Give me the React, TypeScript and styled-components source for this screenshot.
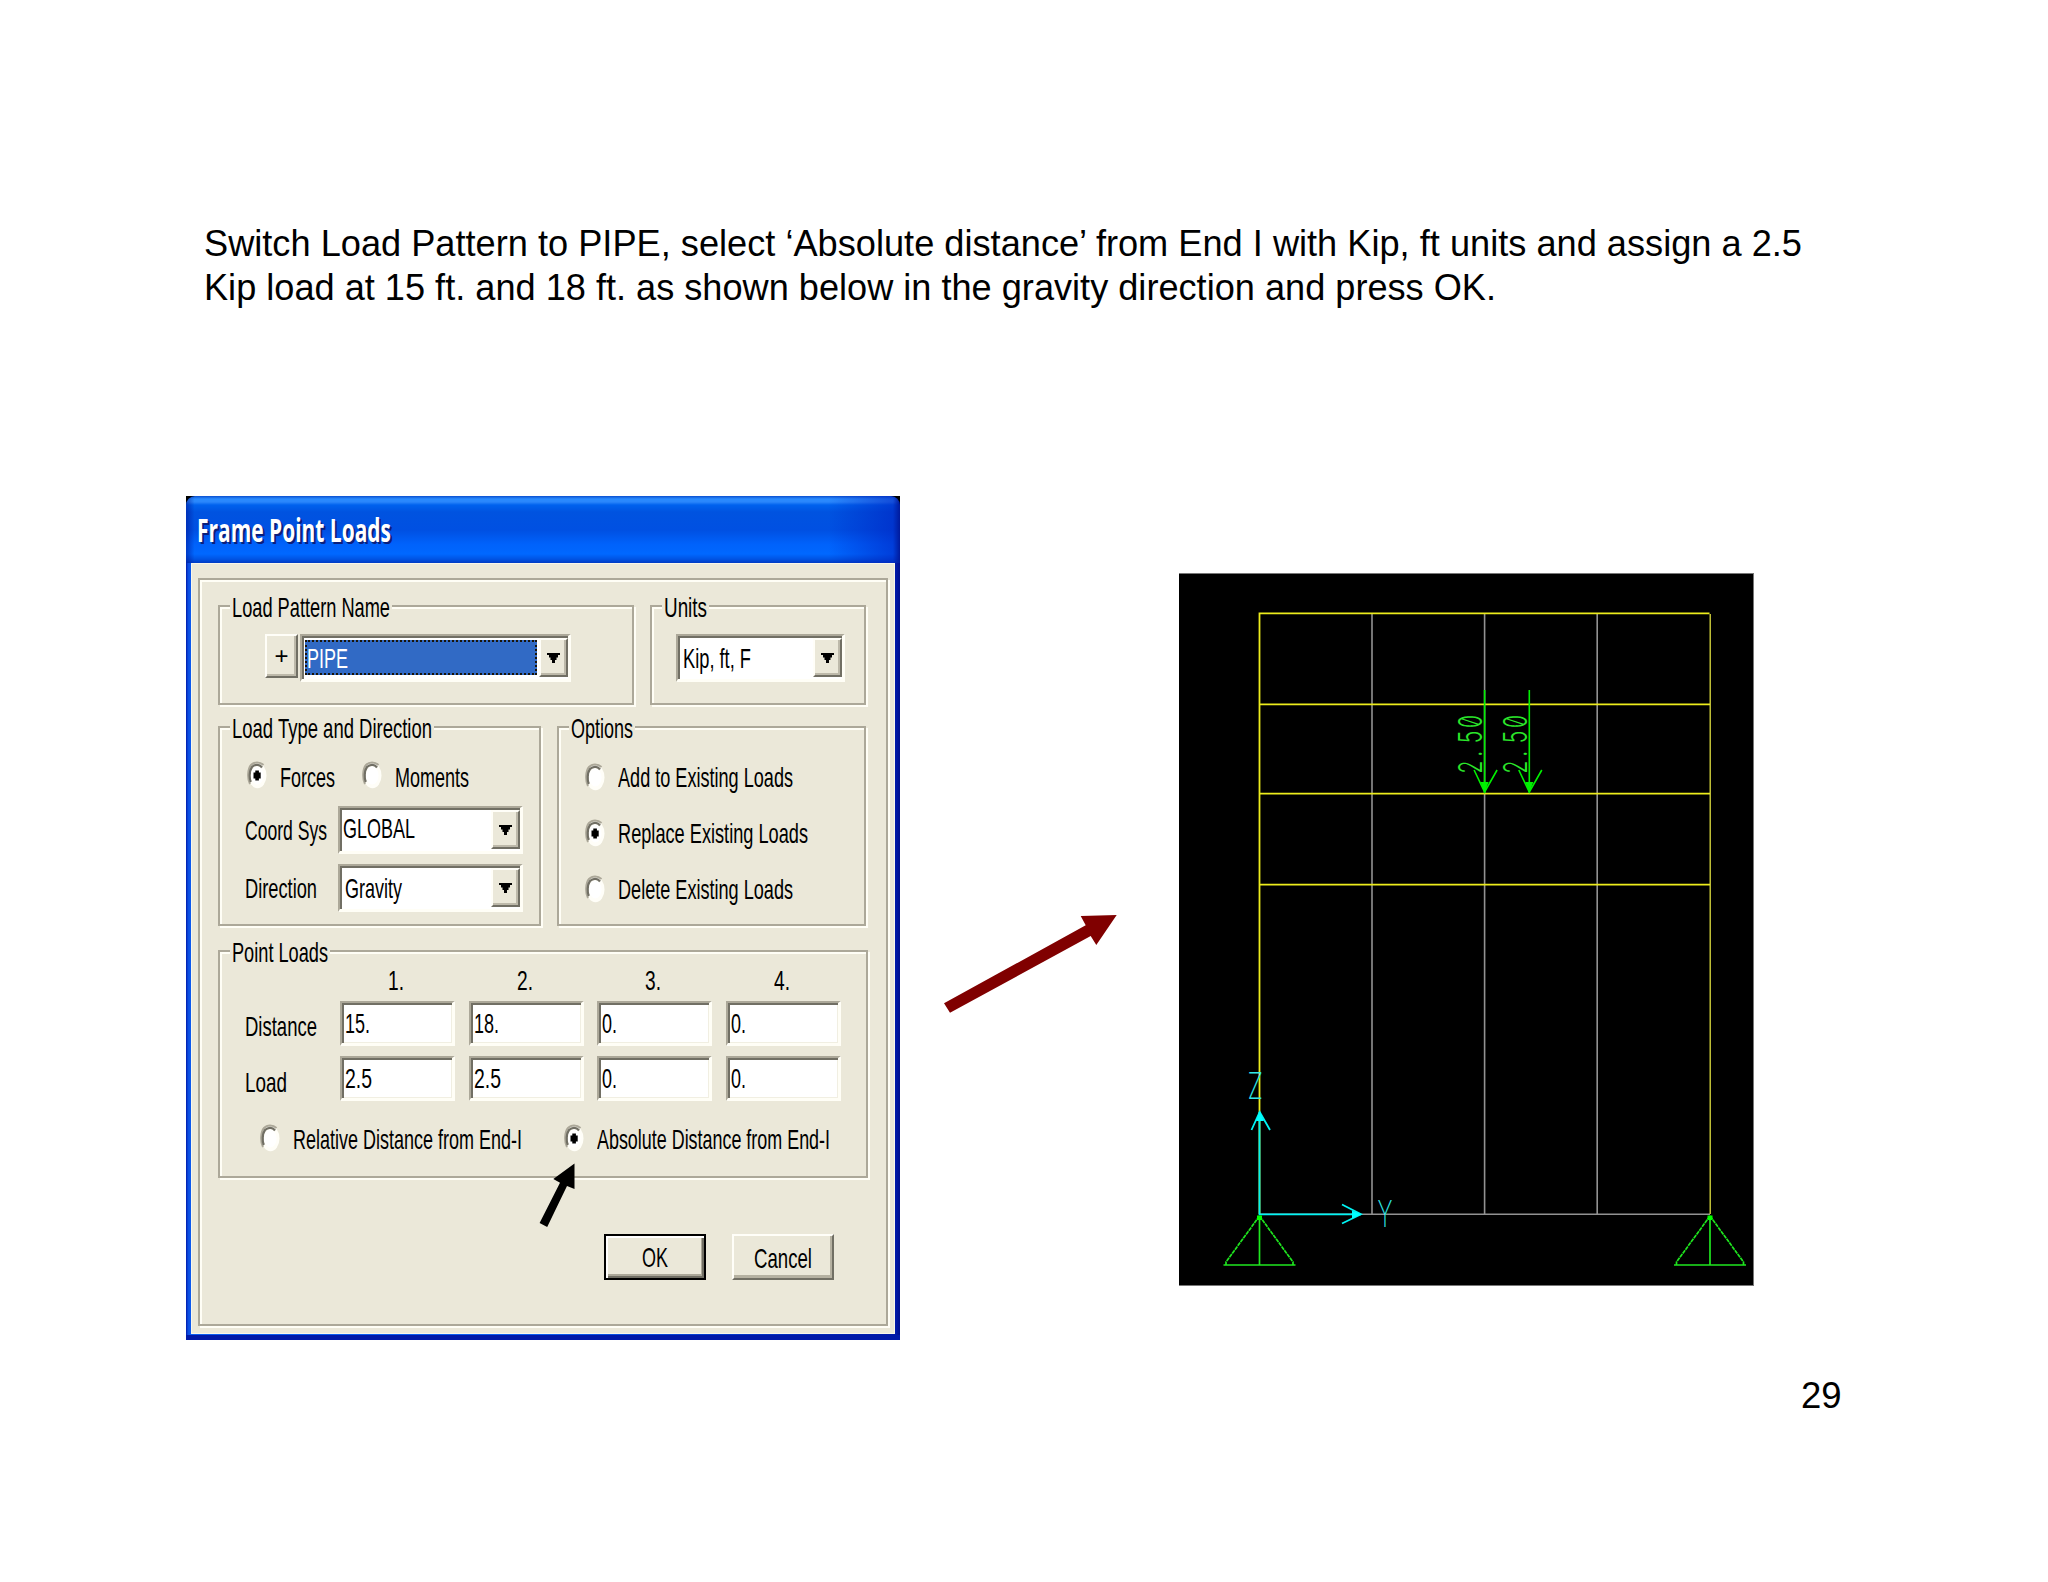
import React, { useLayoutEffect, useRef, useState } from "react";
import styled, { createGlobalStyle } from "styled-components";

const FACE = "#ebe8d9";
const SHADOW = "#aca899";
const DARK = "#716f64";
const LIGHT = "#fffef6";

const GlobalStyle = createGlobalStyle`
  *, *::before, *::after { box-sizing: border-box; }
  body { margin: 0; background: #fff; }
`;

const Page = styled.main`
  width: 2048px;
  height: 1582px;
  padding-top: 222px;
  overflow: hidden;
  background: #fff;
  color: #000;
  font-family: "Liberation Sans", Arial, sans-serif;
`;

const Instructions = styled.div`
  height: 274px;
  padding-left: 204px;
  font-size: 36.5px;
  line-height: 43.5px;
`;

const Line = styled.div`
  display: flex;
`;

const Stage = styled.section`
  display: flex;
  align-items: flex-start;
  height: 844px;
  padding-left: 186px;
`;

const PageNumber = styled.footer`
  margin: 34px 0 0 1801px;
  font-size: 36.5px;
  line-height: 43.5px;
`;

/* Text condensed horizontally to an exact advance width */
const FitBox = styled.span<{ $w: number }>`
  display: inline-block;
  flex: none;
  width: ${(p) => p.$w}px;
  white-space: nowrap;
`;
const FitInner = styled.span`
  display: inline-block;
  transform-origin: 0 0;
`;

function Fit({ w, children }: { w: number; children: React.ReactNode }) {
  const ref = useRef<HTMLSpanElement>(null);
  const [scale, setScale] = useState(1);
  useLayoutEffect(() => {
    const natural = ref.current!.getBoundingClientRect().width;
    setScale(w / natural);
  }, [w]);
  return (
    <FitBox $w={w}>
      <FitInner ref={ref} style={{ transform: `scaleX(${scale})` }}>
        {children}
      </FitInner>
    </FitBox>
  );
}

const Dialog = styled.div`
  position: relative;
  flex: none;
  display: flex;
  flex-direction: column;
  width: 714px;
  height: 844px;
  background: #000;
  font-size: 28.5px;
  line-height: 28px;
`;

const TitleBar = styled.header`
  flex: none;
  height: 67px;
  padding: 16px 0 0 11px;
  border-radius: 9px 9px 0 0;
  background:
    linear-gradient(90deg, rgba(0, 20, 150, 0.55), rgba(0, 60, 220, 0) 1.2%, rgba(0, 60, 220, 0) 90%, rgba(0, 30, 190, 0.55) 99%, #001a9c),
    linear-gradient(180deg, #0a4fd0 0, #2a8cff 3px, #2a86fb 6px, #0062ee 9px, #0053e0 16px, #0050e2 34px, #0062fb 48px, #0068ff 58px, #0054e4 63px, #003bc4 67px);
  color: #fff;
  font-family: "Open Sans", "Noto Sans", sans-serif;
  font-size: 32px;
  font-weight: 700;
  line-height: 36px;
  text-shadow: 3px 2px 0 #0a1f7c;
`;

const Chrome = styled.div`
  flex: 1;
  padding: 0 5px 6px;
  background: linear-gradient(90deg, #0019a8 0, #0b4be0 2px, #0c5cf0 5px, #0c5cf0 50%, #0019a8 calc(100% - 4px), #000f8c 100%);
  box-shadow: inset 0 -5px 0 #0019a8;
`;

const Client = styled.div`
  height: 771px;
  padding: 14px 6px 7px 6px;
  border: 1px solid #f8f6ea;
  background: ${FACE};
`;

const etched = `
  border: 2px solid ${SHADOW};
  box-shadow: 2px 2px 0 ${LIGHT}, inset 2px 2px 0 ${LIGHT};
`;

const Frame = styled.div`
  ${etched}
  display: flex;
  flex-direction: column;
  width: 690px;
  height: 748px;
  padding: 25px 0 0 18px;
`;

const Columns = styled.div<{ $mb: number }>`
  display: flex;
  gap: 16px;
  margin-bottom: ${(p) => p.$mb}px;
`;

const Group = styled.section<{ $w: number; $h: number }>`
  ${etched}
  flex: none;
  width: ${(p) => p.$w}px;
  height: ${(p) => p.$h}px;
`;

const Legend = styled.div`
  display: block;
  width: fit-content;
  height: 28px;
  margin: -14px 0 0 10px;
  padding: 0 2px;
  background: ${FACE};
`;

const Row = styled.div<{ $pl?: number; $pt?: number; $h?: number; $gap?: number }>`
  display: flex;
  align-items: flex-start;
  gap: ${(p) => p.$gap ?? 0}px;
  padding-left: ${(p) => p.$pl ?? 0}px;
  padding-top: ${(p) => p.$pt ?? 0}px;
  height: ${(p) => (p.$h ? `${p.$h}px` : "auto")};
`;

const Label = styled.div<{ $w: number; $pt?: number }>`
  flex: none;
  width: ${(p) => p.$w}px;
  padding-top: ${(p) => p.$pt ?? 0}px;
`;

const raised = `
  background: ${FACE};
  border-style: solid;
  border-width: 2px;
  border-color: #fffef8 ${DARK} ${DARK} #fffef8;
  box-shadow: inset -2px -2px 0 #bdb9aa;
`;

const PlusButton = styled.button`
  ${raised}
  width: 33px;
  height: 44px;
  margin: 0;
  padding: 0;
  display: flex;
  align-items: center;
  justify-content: center;
  font: 24px/1 "Liberation Sans", Arial, sans-serif;
  color: #000;
`;

const sunken = `
  border-style: solid;
  border-width: 2px 3px 3px 2px;
  border-color: ${SHADOW} ${LIGHT} ${LIGHT} ${SHADOW};
`;

const Combo = styled.div<{ $w: number }>`
  ${sunken}
  flex: none;
  display: flex;
  width: ${(p) => p.$w}px;
  height: 48px;
  padding: 2px 0 1px 2px;
  background: #fff;
  box-shadow: inset 2px 2px 0 ${DARK};
`;

const ComboValue = styled.div<{ $lift?: number; $pl?: number }>`
  flex: 1;
  padding-left: ${(p) => p.$pl ?? 3}px;
  line-height: ${(p) => 41 - (p.$lift ?? 0) * 2}px;
`;

const ComboSelected = styled.div`
  flex: 1;
  height: 35px;
  margin: 2px 2px 0 1px;
  padding-left: 0;
  border: 2px dotted #1a1408;
  background: #316ac5;
  color: #fff;
  line-height: 33px;
`;

const DropButton = styled.div`
  ${raised}
  flex: none;
  display: flex;
  align-items: center;
  justify-content: center;
  width: 29px;
  height: 39px;
`;

const Field = styled.div`
  ${sunken}
  flex: none;
  width: 115px;
  height: 45px;
  padding: 6px 0 0 3px;
  background: #fff;
  box-shadow: inset 2px 2px 0 ${DARK}, inset -1px -1px 0 #f1efe2;
`;

const ColumnHead = styled.div`
  width: 115px;
  padding-left: 48px;
`;

const Option = styled.div<{ $gap: number; $w: number }>`
  flex: none;
  display: flex;
  align-items: flex-start;
  gap: ${(p) => p.$gap}px;
  width: ${(p) => p.$w}px;
  height: 28px;
`;

const RadioSvg = styled.svg<{ $dy: number }>`
  flex: none;
  display: block;
  margin-top: ${(p) => p.$dy}px;
`;

const PushButton = styled.button<{ $default?: boolean }>`
  width: 102px;
  height: 46px;
  margin: 0;
  padding: ${(p) => (p.$default ? "0 0 1px" : "2px 0 1px")};
  display: flex;
  align-items: center;
  justify-content: center;
  color: #000;
  background: ${FACE};
  font: 28.5px/28px "Liberation Sans", Arial, sans-serif;
  border: 2px solid;
  border-color: ${(p) => (p.$default ? "#000" : `#fffef8 ${DARK} ${DARK} #fffef8`)};
  box-shadow: ${(p) =>
    p.$default
      ? `inset 2px 2px 0 #fff, inset -2px -2px 0 ${DARK}, inset -3px -4px 0 ${SHADOW}`
      : "inset -2px -3px 0 #b5b1a1"};
`;

const Pointer = styled.svg`
  position: absolute;
  left: 350px;
  top: 665px;
`;

const FlowArrow = styled.svg`
  flex: none;
  margin: 407px 0 0 43px;
`;

const Model = styled.svg`
  flex: none;
  display: block;
  margin: 77px 0 0 61px;
  background: #000;
`;

function Radio({ on, dy = 0 }: { on?: boolean; dy?: number }) {
  return (
    <RadioSvg $dy={dy} width="20" height="28" viewBox="0 0 20 28">
      <ellipse cx="10.5" cy="14.5" rx="9" ry="12.8" fill="#fffef8" />
      <path d="M3 23 C0.2 18 0.6 8 4 4 C7 .6 13 .6 16.5 4" fill="none" stroke="#aca899" strokeWidth="2" />
      <path d="M3.8 21 C2 17 2.4 9.500 5 6 C8 3 12.500 3 15 6.500" fill="none" stroke="#716f64" strokeWidth="2.2" />
      <ellipse cx="10.300" cy="14.500" rx="6.300" ry="9" fill="#fff" />
      {on && <path d="M8.300 9.500h3.600v2h1.800v6h-1.800v2H8.300v-2H6.500v-6h1.800z" fill="#000" />}
    </RadioSvg>
  );
}

function Dropdown() {
  return (
    <DropButton>
      <svg width="13" height="10" viewBox="0 0 13 10">
        <path d="M0 0H13V2H11V4.500H9.500V7H8V10H5V7H3.500V4.500H2V2H0Z" fill="#000" />
      </svg>
    </DropButton>
  );
}

const distances: [string, number][] = [["15.", 25], ["18.", 25], ["0.", 15], ["0.", 15]];
const loads: [string, number][] = [["2.5", 27], ["2.5", 27], ["0.", 15], ["0.", 15]];
const options: [string, number, boolean][] = [
  ["Add to Existing Loads", 175, false],
  ["Replace Existing Loads", 190, true],
  ["Delete Existing Loads", 175, false],
];

function FramePointLoads() {
  return (
    <Dialog>
      <TitleBar>
        <Fit w={194}>Frame Point Loads</Fit>
      </TitleBar>
      <Chrome>
        <Client>
          <Frame>
            <Columns $mb={21}>
              <Group $w={416} $h={100}>
                <Legend><Fit w={158}>Load Pattern Name</Fit></Legend>
                <Row $pl={45} $pt={13} $gap={2}>
                  <PlusButton>+</PlusButton>
                  <Combo $w={271}>
                    <ComboSelected><Fit w={41}>PIPE</Fit></ComboSelected>
                    <Dropdown />
                  </Combo>
                </Row>
              </Group>
              <Group $w={216} $h={100}>
                <Legend><Fit w={43}>Units</Fit></Legend>
                <Row $pl={24} $pt={13}>
                  <Combo $w={169}>
                    <ComboValue><Fit w={68}>Kip, ft, F</Fit></ComboValue>
                    <Dropdown />
                  </Combo>
                </Row>
              </Group>
            </Columns>
            <Columns $mb={24}>
              <Group $w={323} $h={200}>
                <Legend><Fit w={200}>Load Type and Direction</Fit></Legend>
                <Row $pl={27} $pt={21} $h={64}>
                  <Option $gap={13} $w={115}>
                    <Radio on dy={-2} />
                    <Fit w={55}>Forces</Fit>
                  </Option>
                  <Option $gap={13} $w={115}>
                    <Radio dy={-2} />
                    <Fit w={74}>Moments</Fit>
                  </Option>
                </Row>
                <Row $pl={25} $h={58}>
                  <Label $w={93} $pt={10}><Fit w={82}>Coord Sys</Fit></Label>
                  <Combo $w={185}>
                    <ComboValue $lift={2} $pl={1}><Fit w={72}>GLOBAL</Fit></ComboValue>
                    <Dropdown />
                  </Combo>
                </Row>
                <Row $pl={25}>
                  <Label $w={93} $pt={10}><Fit w={72}>Direction</Fit></Label>
                  <Combo $w={185}>
                    <ComboValue><Fit w={57}>Gravity</Fit></ComboValue>
                    <Dropdown />
                  </Combo>
                </Row>
              </Group>
              <Group $w={309} $h={200}>
                <Legend><Fit w={62}>Options</Fit></Legend>
                <Row $pt={21} />
                {options.map(([text, w, on]) => (
                  <Row key={text} $pl={26} $h={56}>
                    <Option $gap={13} $w={230}>
                      <Radio on={on} />
                      <Fit w={w}>{text}</Fit>
                    </Option>
                  </Row>
                ))}
              </Group>
            </Columns>
            <Group $w={650} $h={228}>
              <Legend><Fit w={96}>Point Loads</Fit></Legend>
              <Row $pl={120} $gap={13.6} $h={35}>
                {["1.", "2.", "3.", "4."].map((t) => (
                  <ColumnHead key={t}><Fit w={16}>{t}</Fit></ColumnHead>
                ))}
              </Row>
              <Row $pl={25} $h={55}>
                <Label $w={95} $pt={11}><Fit w={72}>Distance</Fit></Label>
                <Row $gap={13.6}>
                  {distances.map(([t, w], i) => (
                    <Field key={i}><Fit w={w}>{t}</Fit></Field>
                  ))}
                </Row>
              </Row>
              <Row $pl={25} $h={69}>
                <Label $w={95} $pt={12}><Fit w={42}>Load</Fit></Label>
                <Row $gap={13.6}>
                  {loads.map(([t, w], i) => (
                    <Field key={i}><Fit w={w}>{t}</Fit></Field>
                  ))}
                </Row>
              </Row>
              <Row $pl={40}>
                <Option $gap={13} $w={304}>
                  <Radio dy={-1} />
                  <Fit w={229}>Relative Distance from End-I</Fit>
                </Option>
                <Option $gap={13} $w={270}>
                  <Radio on dy={-1} />
                  <Fit w={233}>Absolute Distance from End-I</Fit>
                </Option>
              </Row>
            </Group>
            <Row $pl={386} $pt={56} $gap={26}>
              <PushButton $default><Fit w={26}>OK</Fit></PushButton>
              <PushButton><Fit w={58}>Cancel</Fit></PushButton>
            </Row>
          </Frame>
        </Client>
      </Chrome>
      <Pointer width="42" height="70" viewBox="536 1161 42 70">
        <path d="M574.500 1163.500L553.300 1179L560 1182.700L539.600 1223L547.200 1227L567 1186L574.500 1189Z" fill="#000" />
      </Pointer>
    </Dialog>
  );
}

const Digits = styled.text`
  font-family: Inter, "Liberation Sans", sans-serif;
  font-size: 32.5px;
  font-weight: 300;
  font-feature-settings: "zero", "tnum";
`;

const AxisName = styled.text`
  font-family: Inter, "Liberation Sans", sans-serif;
  font-size: 37px;
  font-weight: 200;
`;

function PointLoad({ x }: { x: number }) {
  return (
    <g stroke="#00f000" strokeWidth="1.600" fill="none">
      <path d={`M${x} 690V793`} />
      <path d={`M${x - 10.500} 770L${x} 792L${x + 12.500} 770`} />
      <path d={`M${x - 4} 782h8l-4 11z`} fill="#00f000" stroke="none" />
      <Digits
        fill="#2be52b"
        stroke="none"
        transform={`translate(${x - 2.500} 774) rotate(-90) scale(.66 1)`}
        x="0 26 46 69"
      >
        2.50
      </Digits>
    </g>
  );
}

function Support({ x }: { x: number }) {
  return (
    <g stroke="#1fe61f" strokeWidth="1.700" fill="none">
      <path d={`M${x} 1216L${x - 33.500} 1262V1265M${x} 1216L${x + 33.500} 1262V1265`} strokeDasharray="4 .7" />
      <path d={`M${x} 1216V1265M${x - 36} 1265H${x + 36}`} />
      <rect x={x - 2.500} y="1215.500" width="5" height="4.500" fill="#00ff00" stroke="none" />
    </g>
  );
}

function StructureModel() {
  return (
    <Model width="575" height="713" viewBox="1179 573 575 713">
      <path d="M1179 573.500H1754M1753.500 573V1286M1179 1285.500H1754" stroke="#777" fill="none" />
      <path d="M1372 613V1214M1484.600 613V1214M1597.200 613V1214M1259.500 1214.300H1710" stroke="#929292" strokeWidth="1.600" fill="none" />
      <path d="M1259.500 613.300H1709.500M1259.500 704.300H1710M1259.500 793.700H1710M1259.500 884.700H1710M1259.500 612.500V1214" stroke="#ecec1c" strokeWidth="1.800" fill="none" />
      <path d="M1710.200 614V1214" stroke="#e0e040" strokeWidth="1.300" />
      <PointLoad x={1484.6} />
      <PointLoad x={1529.3} />
      <g stroke="#00f4f4" strokeWidth="1.800" fill="none">
        <path d="M1259.500 1112V1214.300H1361" />
        <path d="M1251.500 1130L1259.700 1112L1270 1130M1342 1204.500L1361 1214.300L1342 1223.500" />
        <path d="M1256 1121L1259.700 1111.500L1264 1121ZM1352 1210.500L1361.500 1214.300L1352 1218.500Z" fill="#00ffff" stroke="none" />
      </g>
      <AxisName fill="#30e8e8" transform="translate(1247.500 1098.500) scale(.68 1)">Z</AxisName>
      <AxisName fill="#30e8e8" transform="translate(1377.500 1227) scale(.62 1)">Y</AxisName>
      <Support x={1259.5} />
      <Support x={1710} />
    </Model>
  );
}

export default function App() {
  return (
    <Page>
      <GlobalStyle />
      <Instructions>
        <Line>
          <Fit w={1598}>
            Switch Load Pattern to PIPE, select ‘Absolute distance’ from End I with Kip, ft units and assign a 2.5
          </Fit>
        </Line>
        <Line>
          <Fit w={1292}>Kip load at 15 ft. and 18 ft. as shown below in the gravity direction and press OK.</Fit>
        </Line>
      </Instructions>
      <Stage>
        <FramePointLoads />
        <FlowArrow width="175" height="112" viewBox="943 903 175 112">
          <path d="M1116.700 915L1080.700 916L1085.700 925.300L944 1003.300L950 1012.700L1090.700 936L1096.300 945Z" fill="#800000" />
        </FlowArrow>
        <StructureModel />
      </Stage>
      <PageNumber>29</PageNumber>
    </Page>
  );
}
